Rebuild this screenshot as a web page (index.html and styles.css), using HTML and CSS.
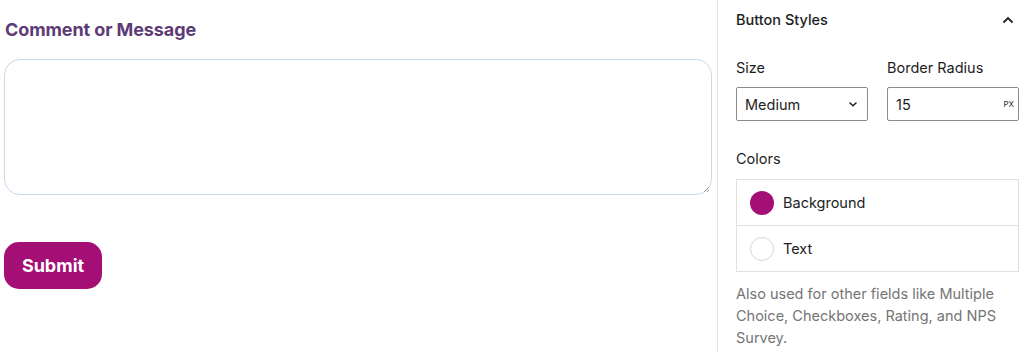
FILE: index.html
```html
<!DOCTYPE html>
<html>
<head>
<meta charset="utf-8">
<link rel="stylesheet" href="styles.css">
</head>
<body>
<div class="page">
  <main class="form">
    <h2 class="field-label">Comment or Message</h2>
    <div class="textarea"><svg class="grip" width="8" height="8" viewBox="0 0 8 8"><path d="M7 2L2 7M7 5L5 7" stroke="#9a9a9a" stroke-width="1"/></svg></div>
    <button class="submit">Submit</button>
  </main>
  <aside class="sidebar">
    <div class="panel-head">
      <span class="panel-title">Button Styles</span>
      <svg class="chev" width="14" height="10" viewBox="0 0 14 10"><path d="M2.5 7.5L7 3l4.5 4.5" fill="none" stroke="#1e1e1e" stroke-width="1.8"/></svg>
    </div>
    <div class="row2">
      <div class="ctl">
        <div class="ctl-label">Size</div>
        <div class="box select"><span>Medium</span><svg width="12" height="8" viewBox="0 0 12 8"><path d="M2.5 2.5L6 5.8l3.5-3.3" fill="none" stroke="#1e1e1e" stroke-width="1.4"/></svg></div>
      </div>
      <div class="ctl">
        <div class="ctl-label">Border Radius</div>
        <div class="box input"><span>15</span><span class="unit">PX</span></div>
      </div>
    </div>
    <div class="ctl-label colors-label">Colors</div>
    <div class="color-list">
      <div class="color-row"><span class="swatch filled"></span><span>Background</span></div>
      <div class="color-row"><span class="swatch empty"></span><span>Text</span></div>
    </div>
    <p class="help">Also used for other fields like Multiple Choice, Checkboxes, Rating, and NPS Survey.</p>
  </aside>
</div>
</body>
</html>
```

FILE: styles.css
```css
html, body { margin: 0; padding: 0; background: #fff; }
body { font-family: "Inter", "Liberation Sans", sans-serif; }
.page { display: flex; height: 351px; overflow: hidden; }
.form { width: 708px; padding: 0 5px 0 4px; border-right: 1px solid #e4e4e4; flex: none; display: flex; flex-direction: column; align-items: flex-start; }
.field-label { margin: 19px 0 0 1px; font-size: 18px; line-height: 22px; font-weight: 700; color: #5d3b76; letter-spacing: -0.1px; }
.textarea { margin-top: 18px; width: 706px; height: 134px; border: 1px solid #c6dbec; border-radius: 16px; position: relative; }
.grip { position: absolute; right: 1px; bottom: 1px; }
.submit { margin-top: 47px; width: 98px; height: 47px; border: none; border-radius: 15px; background: #a30f74; color: #fff; font-family: "Inter", "Liberation Sans", sans-serif; font-size: 18px; font-weight: 700; padding: 0; }
.sidebar { flex: 1; padding: 0 5px 0 18px; color: #1e1e1e; font-size: 14.5px; }
.panel-head { display: flex; justify-content: space-between; align-items: center; height: 39px; }
.panel-title { font-weight: 500; font-size: 14.5px; }
.chev { margin-right: 4px; }
.row2 { display: flex; gap: 19px; margin-top: 20px; }
.ctl { flex: 1; }
.ctl-label { font-size: 14.5px; line-height: 18px; }
.box { margin-top: 10px; height: 32px; border: 1px solid #8c8c8c; border-radius: 2px; display: flex; align-items: center; justify-content: space-between; padding: 0 9px 0 8px; font-size: 14.5px; }
.unit { font-size: 8px; color: #1e1e1e; margin-right: -5px; }
.select svg { margin-right: -1px; }
.colors-label { margin-top: 29px; }
.color-list { margin-top: 11px; border: 1px solid #e0e0e0; }
.color-row { display: flex; align-items: center; gap: 9px; height: 45px; padding: 0 13px; font-size: 14.5px; }
.color-row + .color-row { border-top: 1px solid #e0e0e0; }
.swatch { width: 24px; height: 24px; border-radius: 50%; box-sizing: border-box; flex: none; }
.filled { background: #a30f74; }
.empty { border: 1px solid #d6d6d6; background: #fff; }
.help { margin: 11px 0 0; color: #757575; font-size: 14.5px; line-height: 22px; }
```
